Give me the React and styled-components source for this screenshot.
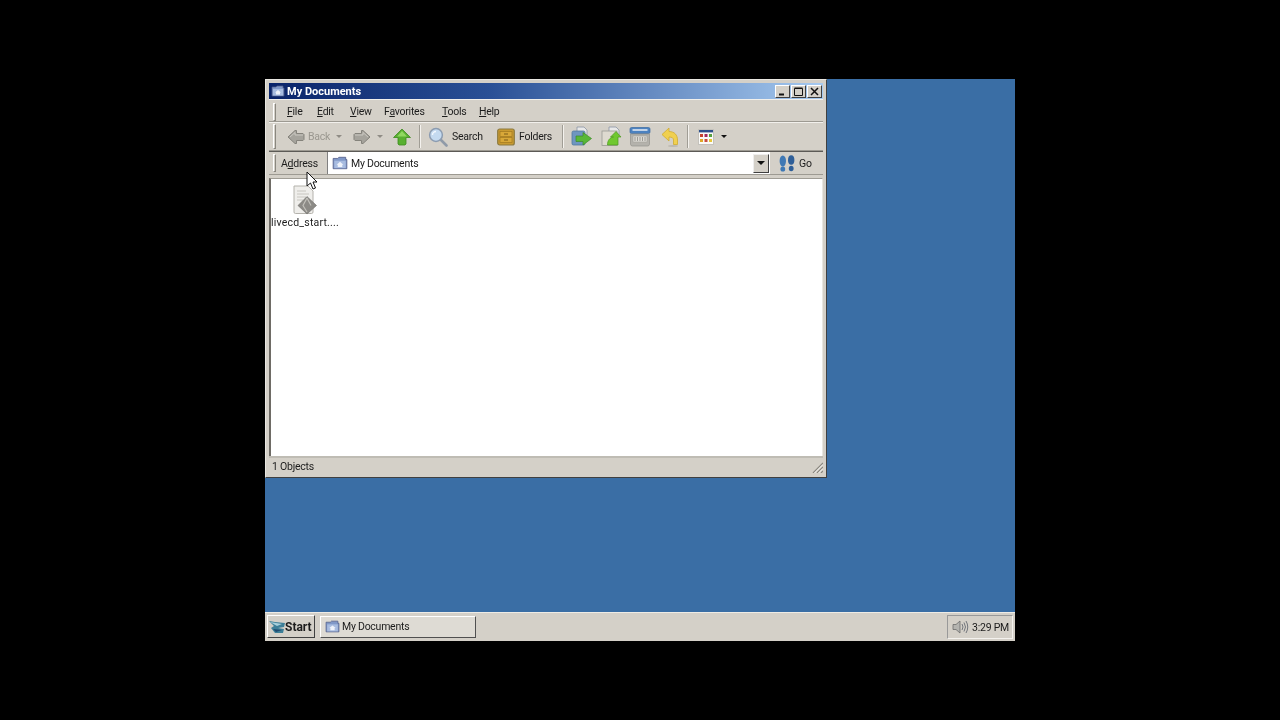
import React from "react";
import styled, { createGlobalStyle } from "styled-components";

const GlobalStyle = createGlobalStyle`
  html, body {
    margin: 0;
    height: 100%;
    background: #000;
    overflow: hidden;
  }
  body {
    font-family: Roboto, "Liberation Sans", Arial, sans-serif;
    font-size: 10.5px;
    letter-spacing: -0.25px;
    color: #1c1c1c;
  }
  u { text-underline-offset: 1px; }
`;

const Screen = styled.div`
  width: 1280px;
  height: 720px;
  padding: 79px 0 0 265px;
  box-sizing: border-box;
  background: #000;
`;

const Desktop = styled.div`
  width: 750px;
  height: 562px;
  display: flex;
  flex-direction: column;
  background: #3a6ea5;
  filter: blur(0.4px);
`;

const Wallpaper = styled.div`
  flex: 1;
  position: relative;
`;

const Win = styled.div`
  position: absolute;
  left: 0;
  top: 0;
  width: 562px;
  height: 399px;
  box-sizing: border-box;
  display: flex;
  flex-direction: column;
  padding: 3px;
  background: #d4d0c8;
  border: 1px solid;
  border-color: #e8e6e0 #404040 #404040 #e8e6e0;
`;

const TitleBar = styled.div`
  height: 16px;
  flex: none;
  display: flex;
  align-items: center;
  padding: 0 1px 0 2px;
  gap: 1px;
  background: linear-gradient(90deg, #0a246a 0%, #2a5096 40%, #a6caf0 100%);
`;

const TitleText = styled.span`
  flex: 1;
  margin-left: 1px;
  color: #fff;
  font-weight: 700;
  font-size: 11px;
  letter-spacing: 0;
`;

const CaptionBtn = styled.div`
  width: 15px;
  height: 13px;
  display: flex;
  align-items: center;
  justify-content: center;
  box-sizing: border-box;
  background: #d4d0c8;
  border: 1px solid;
  border-color: #fff #404040 #404040 #fff;
`;

const Band = styled.div`
  flex: none;
  height: ${(p) => p.$h}px;
  padding-top: ${(p) => p.$pt || 0}px;
  display: flex;
  align-items: center;
  box-sizing: border-box;
  border-top: 1px solid ${(p) => p.$line || "#f2f0ec"};
  border-bottom: 1px solid #9d9a92;
`;

const Grip = styled.div`
  width: 1px;
  height: ${(p) => p.$h}px;
  margin: 0 1px 0 4px;
  flex: none;
  border: 1px solid;
  border-color: #fff #8a877f #8a877f #fff;
`;

const MenuItem = styled.span`
  width: ${(p) => p.$w}px;
  margin-left: ${(p) => p.$ml || 0}px;
  flex: none;
`;

const Spot = styled.div`
  flex: none;
  display: flex;
  align-items: center;
  margin-left: ${(p) => p.$ml}px;
`;

const ToolLabel = styled.span`
  width: ${(p) => p.$w}px;
  margin-left: ${(p) => p.$ml}px;
  flex: none;
  color: ${(p) => (p.$off ? "#9a978f" : "#1c1c1c")};
`;

const Sep = styled.div`
  width: 1px;
  height: 23px;
  flex: none;
  margin-left: ${(p) => p.$ml}px;
  background: #a09d95;
  border-right: 1px solid #f4f2ee;
`;

const Caret = styled.div`
  width: 0;
  height: 0;
  flex: none;
  margin-left: ${(p) => p.$ml || 0}px;
  border-left: ${(p) => p.$size || 3}px solid transparent;
  border-right: ${(p) => p.$size || 3}px solid transparent;
  border-top: ${(p) => p.$size || 3}px solid ${(p) => (p.$off ? "#8f8c85" : "#111")};
`;

const AddressField = styled.div`
  width: 443px;
  height: 22px;
  flex: none;
  box-sizing: border-box;
  display: flex;
  align-items: center;
  padding-left: 4px;
  background: #fff;
  border-left: 1px solid #808080;
`;

const FieldText = styled.span`
  flex: 1;
  margin-left: 3px;
`;

const DropBtn = styled.div`
  width: 16px;
  height: 19px;
  margin-right: 1px;
  display: flex;
  align-items: center;
  justify-content: center;
  box-sizing: border-box;
  background: #d4d0c8;
  border: 1px solid;
  border-color: #eee #404040 #404040 #eee;
`;

const Content = styled.div`
  flex: 1;
  margin-top: 3px;
  position: relative;
  background: #fff;
  border-left: 2px solid #6e6b65;
  border-top: 1px solid #a09d95;
  border-right: 1px solid #e8e6e0;
`;

const FileItem = styled.div`
  width: 68px;
  display: flex;
  flex-direction: column;
  align-items: center;
  padding: 6px 0 0 0;
  gap: 1px;
`;

const FileName = styled.span`
  white-space: nowrap;
  line-height: 13px;
  letter-spacing: 0.2px;
`;

const StatusBar = styled.div`
  flex: none;
  height: 18px;
  box-sizing: border-box;
  display: flex;
  align-items: center;
  justify-content: space-between;
  padding: 1px 0 0 3px;
  border-top: 2px solid #bfbcb4;
`;

const Pointer = styled.svg`
  position: absolute;
  left: 41px;
  top: 92px;
`;

const Taskbar = styled.div`
  height: 29px;
  flex: none;
  box-sizing: border-box;
  display: flex;
  align-items: center;
  padding: 0 2px 1px;
  background: #d4d0c8;
  border-top: 1px solid #eeece6;
`;

const StartBtn = styled.div`
  width: 48px;
  height: 23px;
  box-sizing: border-box;
  display: flex;
  align-items: center;
  padding-left: 1px;
  font-weight: 700;
  font-size: 12px;
  letter-spacing: 0;
  background: #d4d0c8;
  border: 1px solid;
  border-color: #fff #404040 #404040 #fff;
`;

const TaskBtn = styled.div`
  width: 156px;
  height: 22px;
  margin-left: 5px;
  box-sizing: border-box;
  display: flex;
  align-items: center;
  gap: 2px;
  padding-left: 4px;
  background: #dedbd4;
  border: 1px solid;
  border-color: #fff #505050 #505050 #fff;
`;

const Tray = styled.div`
  width: 66px;
  height: 24px;
  margin: 1px 0 0 auto;
  box-sizing: border-box;
  display: flex;
  align-items: center;
  justify-content: space-between;
  padding: 0 3px 0 4px;
  white-space: nowrap;
  border: 1px solid;
  border-color: #999 #f4f2ee #f4f2ee #999;
`;

const FolderIcon = ({ size = 14 }) => (
  <svg width={size} height={size} viewBox="0 0 14 14">
    <path d="M1 3 L5 3 L6 2 L12 2 L12 4 L13 4 L13 12 L1 12 Z" fill="#8098c8" stroke="#505c88" strokeWidth="0.7" />
    <rect x="2" y="5" width="10" height="6.5" fill="#a8bce0" />
    <path d="M7 6 L10 8.5 L9 8.5 L9 10.5 L5 10.5 L5 8.5 L4 8.5 Z" fill="#eef2fa" />
  </svg>
);

const ArrowIcon = ({ flip }) => (
  <svg width="18" height="18" viewBox="0 0 18 18" style={flip ? { transform: "scaleX(-1)" } : undefined}>
    <path d="M1 9 L8 2.5 L9.5 2.5 L9.5 5.5 L16 5.5 L17 6.5 L17 11.5 L16 12.5 L9.5 12.5 L9.5 15.5 L8 15.5 Z" fill="#a5a39c" stroke="#85837c" strokeWidth="1" />
    <path d="M3 9 L8 4.5 L8 7 L16 7" fill="none" stroke="#c9c7c0" strokeWidth="1" />
  </svg>
);

const UpIcon = () => (
  <svg width="18" height="18" viewBox="0 0 18 18">
    <path d="M9 1 L17.5 9.5 L13 9.5 L13 16 L12 17 L6 17 L5 16 L5 9.5 L0.5 9.5 Z" fill="#58b030" stroke="#3c8a20" strokeWidth="0.8" />
    <path d="M9 3 L14 8.5 L4 8.5 Z" fill="#90d860" />
  </svg>
);

const SearchIcon = () => (
  <svg width="20" height="20" viewBox="0 0 20 20">
    <line x1="12" y1="12" x2="18.5" y2="18.5" stroke="#8f9aa8" strokeWidth="2.6" strokeLinecap="round" />
    <circle cx="8" cy="8" r="6.4" fill="#c4daf0" stroke="#8c9cb0" strokeWidth="1.5" />
    <path d="M4.5 8 A3.5 3.5 0 0 1 8 4.5" fill="none" stroke="#f2f8ff" strokeWidth="1.4" />
  </svg>
);

const FoldersIcon = () => (
  <svg width="18" height="18" viewBox="0 0 18 18">
    <rect x="0.7" y="1" width="16.6" height="16" rx="2" fill="#c89a30" stroke="#8c7a40" strokeWidth="1.2" />
    <rect x="3" y="3.5" width="12" height="5" fill="#d8a838" stroke="#a07820" strokeWidth="0.7" />
    <rect x="3" y="9.5" width="12" height="5" fill="#d8a838" stroke="#a07820" strokeWidth="0.7" />
    <rect x="7" y="5.5" width="4" height="1" fill="#7c5c18" />
    <rect x="7" y="11.5" width="4" height="1" fill="#7c5c18" />
  </svg>
);

const MoveIcon = () => (
  <svg width="21" height="21" viewBox="0 0 21 21">
    <path d="M6 1 L13 1 L16 4 L16 9 L6 9 Z" fill="#e8e8e8" stroke="#8c96a4" strokeWidth="0.8" />
    <rect x="1" y="5" width="13" height="14" rx="1.5" fill="#6e96c0" stroke="#5078a0" strokeWidth="0.8" />
    <path d="M12 6.5 L20.5 12.5 L12 19 L12 15.5 L5 15.5 L5 10 L12 10 Z" fill="#58b838" stroke="#3c8a28" strokeWidth="0.7" />
  </svg>
);

const CopyIcon = () => (
  <svg width="21" height="21" viewBox="0 0 21 21">
    <path d="M8 1 L15 1 L18 4 L18 9 L8 9 Z" fill="#e8e8e8" stroke="#8c96a4" strokeWidth="0.8" />
    <rect x="1" y="5" width="15" height="14.5" fill="#dedad0" stroke="#9a9a94" strokeWidth="0.8" />
    <path d="M6.5 19 C6.5 14 9 11.5 12.5 11 L9.5 11 L15 5.5 L20 11 L17 11 L17 19 Z" fill="#70c830" stroke="#4c9820" strokeWidth="0.7" />
  </svg>
);

const ShredIcon = () => (
  <svg width="22" height="21" viewBox="0 0 22 21">
    <rect x="1" y="1.5" width="20" height="6" rx="1.5" fill="#4c82c0" stroke="#3c6aa0" strokeWidth="0.7" />
    <rect x="3.5" y="3.2" width="15" height="1.6" fill="#dfe8f2" />
    <path d="M1.5 8 L20.5 8 L20.5 18 Q20.5 20 18.5 20 L3.5 20 Q1.5 20 1.5 18 Z" fill="#b4b2ac" stroke="#94928c" strokeWidth="0.7" />
    <rect x="4" y="10" width="14" height="6" fill="#dcdad4" stroke="#a4a29c" strokeWidth="0.6" />
    <path d="M6 11 V15 M8.5 11 V15 M11 11 V15 M13.5 11 V15 M16 11 V15" stroke="#8e8c86" strokeWidth="0.8" />
  </svg>
);

const UndoIcon = () => (
  <svg width="18" height="20" viewBox="0 0 18 20">
    <path d="M1 7.5 L8 1 L8 4.5 C13.5 4.5 16.5 8 16.5 13 L16.5 17.5 L12.5 17.5 L12.5 13 C12.5 11 11 10 8 10 L8 14 Z" fill="#f0d050" stroke="#d0ac30" strokeWidth="0.8" />
    <ellipse cx="12" cy="19" rx="5" ry="0.9" fill="#bcb9b0" />
  </svg>
);

const ViewsIcon = () => (
  <svg width="16" height="16" viewBox="0 0 16 16">
    <rect x="0.5" y="0.5" width="15" height="15" fill="#fbfbf8" stroke="#c4c2bc" />
    <rect x="1" y="1" width="14" height="2.4" fill="#2c4f8a" />
    <rect x="2" y="5" width="3" height="3" fill="#c8432c" />
    <rect x="6.5" y="5" width="3" height="3" fill="#a32a5c" />
    <rect x="11" y="5" width="3" height="3" fill="#58a040" />
    <rect x="2" y="10" width="3" height="3" fill="#e0a828" />
    <rect x="6.5" y="10" width="3" height="3" fill="#c84c40" />
    <rect x="11" y="10" width="3" height="3" fill="#e8c838" />
  </svg>
);

const GoIcon = () => (
  <svg width="16" height="17" viewBox="0 0 16 17">
    <ellipse cx="3.8" cy="6" rx="3.2" ry="5.5" fill="#3f78b4" />
    <ellipse cx="3.8" cy="14" rx="2.4" ry="2.6" fill="#3f78b4" />
    <ellipse cx="12.2" cy="5" rx="3.2" ry="4.8" fill="#2f5f98" />
    <ellipse cx="12.2" cy="13.5" rx="2.4" ry="2.8" fill="#2f5f98" />
  </svg>
);

const DocIcon = () => (
  <svg width="26" height="30" viewBox="0 0 26 30">
    <path d="M2 1 L16 1 L21 6 L21 27 Q21 28.5 19.5 28.5 L3.5 28.5 Q2 28.5 2 27 Z" fill="#efeeeb" stroke="#b4b2ac" strokeWidth="1" />
    <path d="M5 6 H14 M5 9 H17 M5 12 H14 M5 15 H11" stroke="#c8c6c0" strokeWidth="1" />
    <path d="M15 11.5 L24.5 20.5 L15 29 L6 20.5 Z" fill="#8c8a86" stroke="#6f6d69" strokeWidth="0.6" />
    <path d="M15 13 L11 20.5 L15 27 M15 13 L19 20.5" fill="none" stroke="#c2c0ba" strokeWidth="1.2" />
  </svg>
);

const StartLogo = () => (
  <svg width="16" height="14" viewBox="0 0 16 14">
    <path d="M0 1 L6 2 L16 3 L15 7 L9 8 L15 9 L14 13 L6 13 L2 8 L5 6 Z" fill="#3d7f98" />
    <path d="M1 2 L13 4 L8 6 Z" fill="#a6d0dc" />
    <path d="M4 9 L13 10 L7 12 Z" fill="#1d4a70" />
  </svg>
);

const SpeakerIcon = () => (
  <svg width="17" height="16" viewBox="0 0 17 16">
    <path d="M1 5.5 L4 5.5 L8 2 L8 14 L4 10.5 L1 10.5 Z" fill="#b4b4b0" stroke="#6c6c6c" strokeWidth="0.8" />
    <path d="M10 5 Q12 8 10 11 M12 3.5 Q15 8 12 12.5 M14 2 Q17.5 8 14 14" fill="none" stroke="#72767c" strokeWidth="1" />
  </svg>
);

const App = () => (
  <Screen>
    <GlobalStyle />
    <Desktop>
      <Wallpaper>
        <Win>
          <TitleBar>
            <FolderIcon />
            <TitleText>My Documents</TitleText>
            <CaptionBtn>
              <svg width="9" height="9" viewBox="0 0 9 9"><rect x="1" y="6.5" width="5" height="2" fill="#111" /></svg>
            </CaptionBtn>
            <CaptionBtn>
              <svg width="9" height="9" viewBox="0 0 9 9"><path d="M0.5 1.5 H8.5 V8.5 H0.5 Z M0.5 1 H8.5" fill="none" stroke="#111" /></svg>
            </CaptionBtn>
            <CaptionBtn>
              <svg width="9" height="9" viewBox="0 0 9 9"><path d="M1 1 L8 8 M8 1 L1 8" stroke="#111" strokeWidth="1.5" /></svg>
            </CaptionBtn>
          </TitleBar>
          <Band $h={23} $pt={2}>
            <Grip $h={16} />
            <MenuItem $ml={10} $w={30}><u>F</u>ile</MenuItem>
            <MenuItem $w={33}><u>E</u>dit</MenuItem>
            <MenuItem $w={34}><u>V</u>iew</MenuItem>
            <MenuItem $w={58}>F<u>a</u>vorites</MenuItem>
            <MenuItem $w={37}><u>T</u>ools</MenuItem>
            <MenuItem $w={30}><u>H</u>elp</MenuItem>
          </Band>
          <Band $h={29}>
            <Grip $h={23} />
            <Spot $ml={10}><ArrowIcon /></Spot>
            <ToolLabel $ml={3} $w={28} $off>Back</ToolLabel>
            <Caret $off />
            <Spot $ml={11}><ArrowIcon flip /></Spot>
            <Caret $ml={6} $off />
            <Spot $ml={10}><UpIcon /></Spot>
            <Sep $ml={8} />
            <Spot $ml={7}><SearchIcon /></Spot>
            <ToolLabel $ml={4} $w={32}>Search</ToolLabel>
            <Spot $ml={13}><FoldersIcon /></Spot>
            <ToolLabel $ml={4} $w={34}>Folders</ToolLabel>
            <Sep $ml={9} />
            <Spot $ml={7}><MoveIcon /></Spot>
            <Spot $ml={9}><CopyIcon /></Spot>
            <Spot $ml={7}><ShredIcon /></Spot>
            <Spot $ml={10}><UndoIcon /></Spot>
            <Sep $ml={8} />
            <Spot $ml={9}><ViewsIcon /></Spot>
            <Caret $ml={7} />
          </Band>
          <Band $h={24} $line="#5c5a56">
            <Grip $h={16} />
            <MenuItem $ml={4} $w={46}>A<u>d</u>dress</MenuItem>
            <AddressField>
              <FolderIcon size={16} />
              <FieldText>My Documents</FieldText>
              <DropBtn><Caret $size={4} /></DropBtn>
            </AddressField>
            <Spot $ml={9}><GoIcon /></Spot>
            <ToolLabel $ml={4} $w={14}>Go</ToolLabel>
          </Band>
          <Content>
            <FileItem>
              <DocIcon />
              <FileName>livecd_start....</FileName>
            </FileItem>
          </Content>
          <StatusBar>
            <span>1 Objects</span>
            <svg width="12" height="12" viewBox="0 0 12 12">
              <path d="M2 12 L12 2 M6 12 L12 6 M10 12 L12 10" stroke="#8a877f" strokeWidth="1.2" />
              <path d="M3.5 12 L12 3.5 M7.5 12 L12 7.5" stroke="#fff" strokeWidth="0.8" />
            </svg>
          </StatusBar>
        </Win>
        <Pointer width="12" height="20" viewBox="0 0 12 20">
          <path d="M1 1 L1 15 L4.5 12 L7 18 L9.5 17 L7 11 L11 11 Z" fill="#fff" stroke="#111" strokeWidth="1" />
        </Pointer>
      </Wallpaper>
      <Taskbar>
        <StartBtn><StartLogo />Start</StartBtn>
        <TaskBtn><FolderIcon size={15} />My Documents</TaskBtn>
        <Tray>
          <SpeakerIcon />
          <span>3:29 PM</span>
        </Tray>
      </Taskbar>
    </Desktop>
  </Screen>
);

export default App;
